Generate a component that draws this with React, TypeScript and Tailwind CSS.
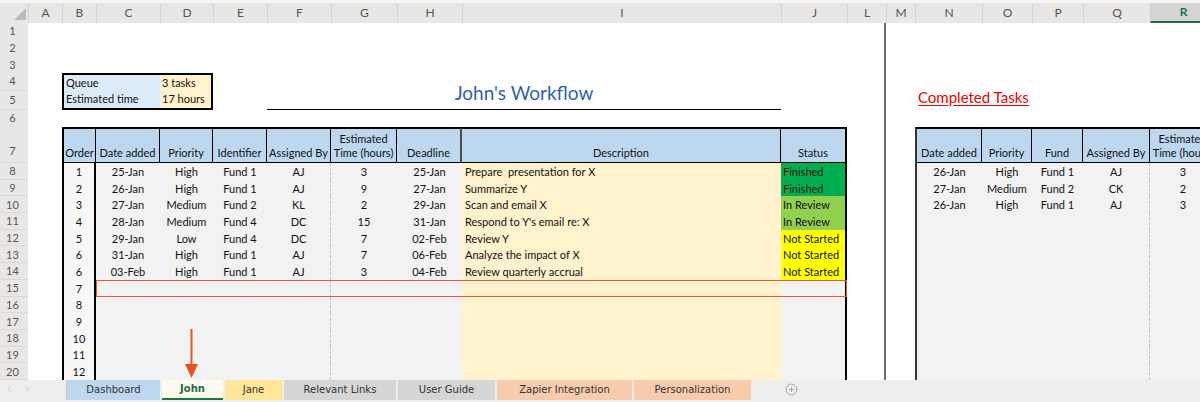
import React from 'react';
import { ChevronLeft, ChevronRight, CirclePlus } from 'lucide-react';

const GRID =
  'grid grid-cols-[28px_34px_34px_64px_53px_54px_64px_66px_65px_319px_66px_39px_29px_67px_50px_51px_67px_66px]';
const MAIN_GRID = 'grid grid-cols-[64px_53px_54px_64px_66px_65px_319px_66px]';

type Status = 'Finished' | 'In Review' | 'Not Started';
type Task = {
  added: string;
  priority: string;
  fund: string;
  by: string;
  hours: number;
  deadline: string;
  desc: string;
  status: Status;
};

const tasks: Task[] = [
  { added: '25-Jan', priority: 'High', fund: 'Fund 1', by: 'AJ', hours: 3, deadline: '25-Jan', desc: 'Prepare  presentation for X', status: 'Finished' },
  { added: '26-Jan', priority: 'High', fund: 'Fund 1', by: 'AJ', hours: 9, deadline: '27-Jan', desc: 'Summarize Y', status: 'Finished' },
  { added: '27-Jan', priority: 'Medium', fund: 'Fund 2', by: 'KL', hours: 2, deadline: '29-Jan', desc: 'Scan and email X', status: 'In Review' },
  { added: '28-Jan', priority: 'Medium', fund: 'Fund 4', by: 'DC', hours: 15, deadline: '31-Jan', desc: "Respond to Y's email re: X", status: 'In Review' },
  { added: '29-Jan', priority: 'Low', fund: 'Fund 4', by: 'DC', hours: 7, deadline: '02-Feb', desc: 'Review Y', status: 'Not Started' },
  { added: '31-Jan', priority: 'High', fund: 'Fund 1', by: 'AJ', hours: 7, deadline: '06-Feb', desc: 'Analyze the impact of X', status: 'Not Started' },
  { added: '03-Feb', priority: 'High', fund: 'Fund 1', by: 'AJ', hours: 3, deadline: '04-Feb', desc: 'Review quarterly accrual', status: 'Not Started' },
];

const orders = [1, 2, 3, 4, 5, 6, 6, 7, 8, 9, 10, 11, 12];

const completed = [
  ['26-Jan', 'High', 'Fund 1', 'AJ', '3'],
  ['27-Jan', 'Medium', 'Fund 2', 'CK', '2'],
  ['26-Jan', 'High', 'Fund 1', 'AJ', '3'],
];

const statusBg: Record<Status, string> = {
  Finished: 'bg-[#00b050]',
  'In Review': 'bg-[#92d050]',
  'Not Started': 'bg-[#ffff00]',
};

const letters = ['A', 'B', 'C', 'D', 'E', 'F', 'G', 'H', 'I', 'J', 'L', 'M', 'N', 'O', 'P', 'Q', 'R'];

const tabs = [
  { name: 'Dashboard', cls: 'w-[93px] bg-[#bdd7ee]' },
  { name: 'John', cls: 'w-[61px] bg-[#fdfbf0] font-bold text-[#1d6b38] border-b-2 border-[#1d7a3e]' },
  { name: 'Jane', cls: 'w-[57px] bg-[#ffe699]' },
  { name: 'Relevant Links', cls: 'w-[112px] bg-[#d6d6d6]' },
  { name: 'User Guide', cls: 'w-[97px] bg-[#d6d6d6]' },
  { name: 'Zapier Integration', cls: 'w-[135px] bg-[#f8cbad]' },
  { name: 'Personalization', cls: 'w-[117px] bg-[#f8cbad]' },
];

const cell = 'flex items-center justify-center whitespace-nowrap';
const head =
  'flex items-end justify-center text-center leading-[14px] pb-[2px] bg-[#bdd7ee] border-t-2 border-b border-r border-black whitespace-nowrap';

function RowNum({ n }: { n: number }) {
  return (
    <div className="flex items-center justify-center pr-[3px] bg-[#e9e7e5] border-b border-[#dcdad8] text-[11px] text-[#555]">
      {n}
    </div>
  );
}

function Divider() {
  return <div className="border-r-2 border-[#6e6e6e]" />;
}

function BlankRow({ n, h }: { n: number; h: string }) {
  return (
    <div className={`${GRID} ${h}`}>
      <RowNum n={n} />
      <div className="col-span-10" />
      <Divider />
      <div className="col-span-6" />
    </div>
  );
}

function MainCells({ t }: { t?: Task }) {
  return (
    <>
      <div className={`${cell} bg-[#f2f2f2]`}>{t?.added}</div>
      <div className={`${cell} bg-[#f2f2f2]`}>{t?.priority}</div>
      <div className={`${cell} bg-[#f2f2f2]`}>{t?.fund}</div>
      <div className={`${cell} bg-[#f2f2f2] border-r border-dashed border-[#c4c4c4]`}>{t?.by}</div>
      <div className={`${cell} bg-[#f2f2f2]`}>{t?.hours}</div>
      <div className={`${cell} bg-[#f2f2f2]`}>{t?.deadline}</div>
      <div className="flex items-center pl-[3px] bg-[#fff2cc] whitespace-pre">{t?.desc}</div>
      <div className={`flex items-center pl-[2px] border-r-2 border-black whitespace-nowrap ${t ? statusBg[t.status] : 'bg-[#f2f2f2]'}`}>
        {t?.status}
      </div>
    </>
  );
}

function BodyRow({ n, i }: { n: number; i: number }) {
  const t = tasks[i];
  const c = completed[i];
  return (
    <div className={`${GRID} h-[16.7px] text-[11px] leading-none`}>
      <RowNum n={n} />
      <div />
      <div className={`${cell} bg-[#f7f7f7] border-x-2 border-black`}>{orders[i]}</div>
      {n === 15 ? (
        <div className={`col-span-8 ${MAIN_GRID} outline outline-[1.5px] outline-[#e2582f] -outline-offset-1`}>
          <MainCells t={t} />
        </div>
      ) : (
        <MainCells t={t} />
      )}
      <Divider />
      <div />
      <div className={`${cell} bg-[#f2f2f2] border-l-2 border-[#333]`}>{c?.[0]}</div>
      <div className={`${cell} bg-[#f2f2f2]`}>{c?.[1]}</div>
      <div className={`${cell} bg-[#f2f2f2]`}>{c?.[2]}</div>
      <div className={`${cell} bg-[#f2f2f2] border-r border-dashed border-[#c4c4c4]`}>{c?.[3]}</div>
      <div className={`${cell} bg-[#f2f2f2]`}>{c?.[4]}</div>
    </div>
  );
}

export default function App() {
  return (
    <div className="relative w-[1200px] h-[402px] overflow-hidden bg-white font-['Lato','Noto_Sans',sans-serif] text-[#111]">
      {/* column letters */}
      <div className={`${GRID} h-[23px] bg-[#e9e7e5] border-t-[3px] border-[#f6f6f5]`}>
        <div>
          <svg width="28" height="20" viewBox="0 0 28 20">
            <polygon points="26,5 26,17 14,17" fill="#bdbbb9" />
          </svg>
        </div>
        {letters.map((l) =>
          l === 'R' ? (
            <div key={l} className="flex items-center justify-center bg-[#d5d4d2] border-l border-[#d0cecc] border-b-2 border-b-[#1e7145] text-[12px] font-bold text-[#1e7145]">
              {l}
            </div>
          ) : (
            <div key={l} className="flex items-center justify-center border-l border-[#d5d3d1] text-[12px] text-[#555]">
              {l}
            </div>
          ),
        )}
      </div>

      <BlankRow n={1} h="h-[17px]" />
      <BlankRow n={2} h="h-[17px]" />
      <BlankRow n={3} h="h-[16px]" />

      {/* row 4 */}
      <div className={`${GRID} h-[18px] grid-rows-[18px] text-[11px]`}>
        <RowNum n={4} />
        <div />
        <div className="col-span-2 flex items-end pl-[2px] pb-[1px] leading-[14px] bg-[#ddebf7] border-l-2 border-t-2 border-black">Queue</div>
        <div className="flex items-end pl-[2px] pb-[1px] leading-[14px] bg-[#fff2cc] border-r-2 border-t-2 border-black">3 tasks</div>
        <div className="col-span-6" />
        <Divider />
        <div className="col-span-6" />
      </div>

      {/* row 5 */}
      <div className={`${GRID} h-[19px] grid-rows-[19px] text-[11px]`}>
        <RowNum n={5} />
        <div />
        <div className="col-span-2 flex items-end pl-[2px] pb-[2px] leading-[14px] bg-[#ddebf7] border-l-2 border-b-2 border-black whitespace-nowrap">Estimated time</div>
        <div className="flex items-end pl-[2px] pb-[2px] leading-[14px] bg-[#fff2cc] border-r-2 border-b-2 border-black whitespace-nowrap">17 hours</div>
        <div />
        <div className="col-span-4 flex items-end justify-center pb-[7px] border-b border-black text-[19px] leading-none text-[#2f5fb5] whitespace-nowrap">
          John's Workflow
        </div>
        <div />
        <Divider />
        <div />
        <div className="col-span-5 flex items-end pl-[3px] pb-[5px] text-[15px] leading-none text-[#f00000] underline decoration-[#f00000] underline-offset-2 whitespace-nowrap">
          Completed Tasks
        </div>
      </div>

      <BlankRow n={6} h="h-[17px]" />

      {/* row 7: table headers */}
      <div className={`${GRID} h-[36px] text-[11px]`}>
        <div className="flex items-end justify-center pb-[3px] pr-[3px] bg-[#e9e7e5] border-b border-[#dcdad8] text-[11px] text-[#555]">7</div>
        <div />
        <div className={`${head} border-l-2`}>Order</div>
        <div className={head}>Date added</div>
        <div className={head}>Priority</div>
        <div className={head}>Identifier</div>
        <div className={head}>Assigned By</div>
        <div className={head}>
          Estimated
          <br />
          Time (hours)
        </div>
        <div className={`${head} border-r-2 border-r-[#4a4a4a]`}>Deadline</div>
        <div className={head}>Description</div>
        <div className={`${head} border-r-2`}>Status</div>
        <Divider />
        <div />
        <div className={`${head} border-l-2 border-l-[#333]`}>Date added</div>
        <div className={head}>Priority</div>
        <div className={head}>Fund</div>
        <div className={head}>Assigned By</div>
        <div className={head}>
          Estimated
          <br />
          Time (hours)
        </div>
      </div>

      {orders.map((_, i) => (
        <BodyRow key={i} n={8 + i} i={i} />
      ))}

      {/* sheet tabs */}
      <div className="flex items-start h-[22px] bg-[#efeeed] font-['DejaVu_Sans',sans-serif] text-[10px] text-[#333]">
        <div className="flex items-center w-[66px] h-[19px] pl-[4px] gap-[8px] text-[#c4c4c4]">
          <ChevronLeft size={10} strokeWidth={2} />
          <ChevronRight size={10} strokeWidth={2} />
        </div>
        <div className="flex h-[20px] gap-[2px] border-l border-[#c9c9c9]">
          {tabs.map((t) => (
            <div key={t.name} className={`flex items-center justify-center h-full ${t.cls}`}>
              {t.name}
            </div>
          ))}
        </div>
        <div className="flex items-center h-[20px] pl-[34px] text-[#8a8a8a]">
          <CirclePlus size={13} strokeWidth={1.3} />
        </div>
      </div>

      {/* annotation arrow */}
      <svg className="absolute left-[184px] top-[329px]" width="15" height="50" viewBox="0 0 15 50">
        <line x1="7.5" y1="0" x2="7.5" y2="38" stroke="#e8501f" strokeWidth="2" />
        <polygon points="1,35 14,35 7.5,49" fill="#e8501f" />
      </svg>
    </div>
  );
}
